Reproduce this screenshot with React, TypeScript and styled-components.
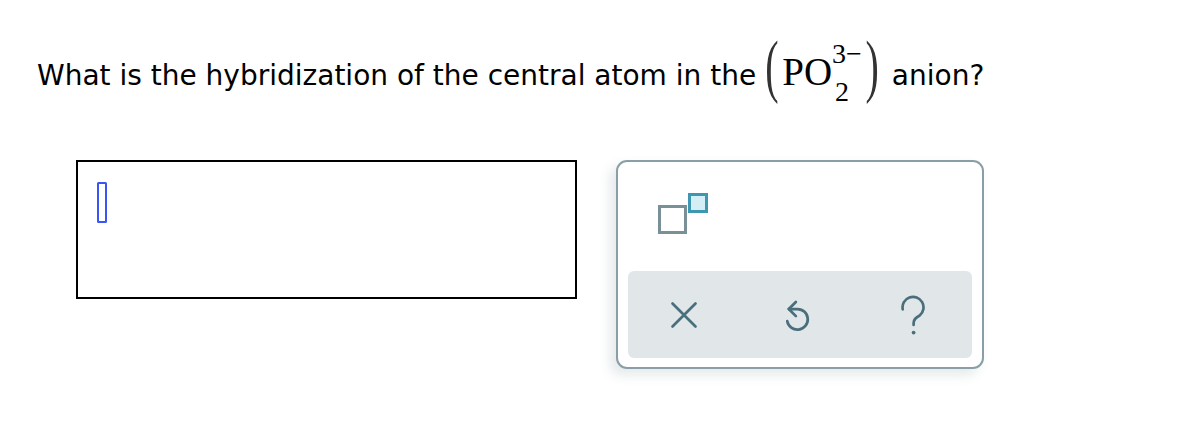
import styled, { createGlobalStyle } from "styled-components";

const GlobalStyle = createGlobalStyle`
  html, body {
    margin: 0;
    padding: 0;
    background: #ffffff;
  }
  body {
    font-family: "DejaVu Sans", Verdana, sans-serif;
    color: #000;
  }
`;

const Page = styled.div`
  width: 1188px;
  height: 432px;
  box-sizing: border-box;
  padding: 40px 0 0 37px;
`;

const Question = styled.div`
  height: 66px;
  font-size: 28px;
  white-space: nowrap;
`;

const Formula = styled.span`
  display: inline-block;
  margin: 0 13px 0 9px;
  font-family: "Liberation Serif", "Times New Roman", serif;
  white-space: nowrap;
`;

const Paren = styled.span<{ $gap?: number }>`
  display: inline-block;
  font-size: 40px;
  line-height: 1;
  color: #333;
  vertical-align: 2.7px;
  margin-left: ${(p) => p.$gap ?? 0}px;
  transform-origin: 50% 23.5px;
  transform: scaleY(1.76);
`;

const Species = styled.span`
  font-size: 39px;
  margin-left: 3.7px;
`;

const Charges = styled.span`
  display: inline-flex;
  flex-direction: column;
  gap: 9.8px;
  font-size: 28px;
  line-height: 1;
  vertical-align: 21.8px;
`;

const Script = styled.span<{ $indent?: number }>`
  padding-left: ${(p) => p.$indent ?? 0}px;
`;

const Workspace = styled.div`
  display: flex;
  align-items: flex-start;
  gap: 39px;
  margin: 54px 0 0 39px;
`;

const AnswerBox = styled.div`
  width: 501px;
  height: 139px;
  box-sizing: border-box;
  border: 2px solid #000;
  padding: 20px 0 0 19px;
`;

const Cursor = styled.div`
  width: 10px;
  height: 41px;
  box-sizing: border-box;
  border: 2.5px solid #3a55f7;
  border-radius: 1.5px;
`;

const Keypad = styled.div`
  width: 368px;
  height: 209px;
  box-sizing: border-box;
  border: 2px solid #8a9ea7;
  border-radius: 11px;
  background: #fff;
  box-shadow: -6px 6px 12px rgba(40, 70, 80, 0.12);
  display: flex;
  flex-direction: column;
  padding: 0 10px 9px 10px;
`;

const KeyRow = styled.div`
  flex: 1;
  display: flex;
  align-items: flex-start;
  padding: 31px 0 0 30px;
`;

const ActionBar = styled.div`
  height: 87px;
  background: #e1e6e9;
  border-radius: 6px;
  display: grid;
  grid-template-columns: 1fr 1fr 1fr;
  align-items: center;
`;

const IconButton = styled.button<{ $dx?: number; $dy?: number }>`
  border: 0;
  background: transparent;
  padding: 0;
  display: flex;
  justify-content: center;
  align-items: center;
  height: 100%;
  transform: translate(${(p) => p.$dx ?? 0}px, ${(p) => p.$dy ?? 0}px);
  cursor: pointer;
`;

const ink = "#4a6f7c";

const SuperscriptIcon = () => (
  <svg width="52" height="44" viewBox="0 0 52 44">
    <rect x="1.5" y="13.5" width="26" height="26" fill="#fff" stroke="#7a9099" strokeWidth="3" />
    <rect x="31.5" y="1.5" width="17" height="17" fill="#d3eef4" stroke="#3d97b0" strokeWidth="3" />
  </svg>
);

const ClearIcon = () => (
  <svg width="28" height="28" viewBox="0 0 28 28">
    <path d="M2.5 2.5 L25.5 25.5 M25.5 2.5 L2.5 25.5" stroke={ink} strokeWidth="2.7" strokeLinecap="round" fill="none" />
  </svg>
);

const UndoIcon = () => (
  <svg width="31" height="37" viewBox="0 0 28 34">
    <path
      d="M6 11.5 L14 11.5 A9.5 9.5 0 1 1 4.6 22.7"
      stroke={ink}
      strokeWidth="2.5"
      strokeLinecap="round"
      fill="none"
    />
    <path d="M12.5 5 L6 11.5 L12.5 18" stroke={ink} strokeWidth="2.5" strokeLinecap="round" strokeLinejoin="round" fill="none" />
  </svg>
);

const HelpIcon = () => (
  <svg width="28" height="40" viewBox="0 0 28 40">
    <path
      d="M3.4 14.3 A10.5 10.5 0 1 1 20.4 20.5 C16 23 14.3 24.5 14.3 28 L14.3 30"
      stroke={ink}
      strokeWidth="2.7"
      strokeLinecap="round"
      fill="none"
    />
    <circle cx="14.3" cy="37.6" r="1.9" fill={ink} />
  </svg>
);

export default function App() {
  return (
    <Page>
      <GlobalStyle />
      <Question>
        What is the hybridization of the central atom in the
        <Formula>
          <Paren>(</Paren>
          <Species>PO</Species>
          <Charges>
            <Script>3−</Script>
            <Script $indent={3}>2</Script>
          </Charges>
          <Paren $gap={3.7}>)</Paren>
        </Formula>
        anion?
      </Question>
      <Workspace>
        <AnswerBox>
          <Cursor />
        </AnswerBox>
        <Keypad>
          <KeyRow>
            <SuperscriptIcon />
          </KeyRow>
          <ActionBar>
            <IconButton $dx={-1}>
              <ClearIcon />
            </IconButton>
            <IconButton $dx={-2} $dy={0.5}>
              <UndoIcon />
            </IconButton>
            <IconButton $dx={-1.7}>
              <HelpIcon />
            </IconButton>
          </ActionBar>
        </Keypad>
      </Workspace>
    </Page>
  );
}
